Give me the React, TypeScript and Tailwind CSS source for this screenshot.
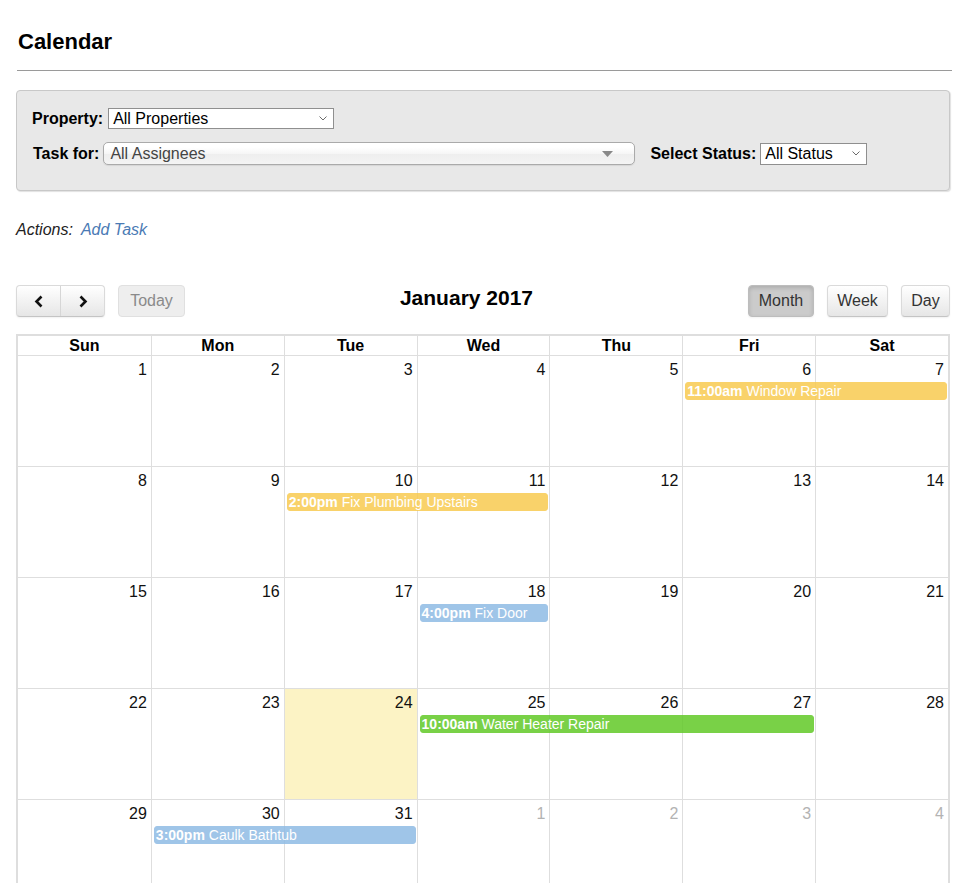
import React from "react";

type CalEvent = {
  col: number;
  span: number;
  time: string;
  title: string;
  color: string;
};

type Week = {
  days: { n: number; other?: boolean; today?: boolean }[];
  events: CalEvent[];
};

const colStart = ["col-start-1", "col-start-2", "col-start-3", "col-start-4", "col-start-5", "col-start-6", "col-start-7"];
const colSpan = ["", "col-span-1", "col-span-2", "col-span-3"];

const YELLOW = "bg-[#f8cb51] border-[#f8cb51]";
const BLUE = "bg-[#8fbbe4] border-[#8fbbe4]";
const GREEN = "bg-[#62c928] border-[#62c928]";

const dayNames = ["Sun", "Mon", "Tue", "Wed", "Thu", "Fri", "Sat"];

const weeks: Week[] = [
  {
    days: [1, 2, 3, 4, 5, 6, 7].map((n) => ({ n })),
    events: [{ col: 5, span: 2, time: "11:00am", title: "Window Repair", color: YELLOW }],
  },
  {
    days: [8, 9, 10, 11, 12, 13, 14].map((n) => ({ n })),
    events: [{ col: 2, span: 2, time: "2:00pm", title: "Fix Plumbing Upstairs", color: YELLOW }],
  },
  {
    days: [15, 16, 17, 18, 19, 20, 21].map((n) => ({ n })),
    events: [{ col: 3, span: 1, time: "4:00pm", title: "Fix Door", color: BLUE }],
  },
  {
    days: [22, 23, 24, 25, 26, 27, 28].map((n) => ({ n, today: n === 24 })),
    events: [{ col: 3, span: 3, time: "10:00am", title: "Water Heater Repair", color: GREEN }],
  },
  {
    days: [
      { n: 29 },
      { n: 30 },
      { n: 31 },
      { n: 1, other: true },
      { n: 2, other: true },
      { n: 3, other: true },
      { n: 4, other: true },
    ],
    events: [{ col: 1, span: 2, time: "3:00pm", title: "Caulk Bathtub", color: BLUE }],
  },
];

const Chevron = () => (
  <svg width="10" height="9" viewBox="0 0 10 6" className="ml-auto shrink-0">
    <polyline points="1.5,1 5,4.5 8.5,1" fill="none" stroke="#6b6b6b" strokeWidth="1" />
  </svg>
);

const btn =
  "h-[32px] justify-center text-[16px] text-[#333] rounded-[4px] border border-[#dadada] border-b-[#c4c4c4] bg-linear-to-b from-white to-[#e6e6e6] shadow-[inset_0_1px_0_rgba(255,255,255,0.2),0_1px_2px_rgba(0,0,0,0.06)] flex items-center";

const App = () => {
  return (
    <div className="w-[970px] h-[883px] overflow-hidden bg-white pl-4 pr-5 font-['Liberation_Sans',Arial,sans-serif] text-black">
      {/* Header */}
      <h1 className="pt-[29px] pl-[2px] text-[22px] leading-[26px] font-bold">Calendar</h1>
      <div className="mt-[15px] ml-px -mr-[2px] border-t border-[#9a9a9a]" />

      {/* Filters */}
      <div className="mt-[19px] rounded-[4px] border border-[#c8c8c8] bg-[#e8e8e8] pl-[15px] pt-[17px] pb-[25px] shadow-[1px_1px_1px_rgba(0,0,0,0.12)]">
        <div className="flex items-center h-[21px]">
          <span className="text-[16px] font-bold">Property:</span>
          <div className="ml-[5px] flex h-[21px] w-[226px] items-center border border-[#8f8f8f] bg-white pl-[4px] pr-[5px] text-[16px]">
            All Properties
            <Chevron />
          </div>
        </div>
        <div className="mt-[13px] flex items-center h-[23px]">
          <span className="pl-px text-[16px] font-bold">Task for:</span>
          <div className="ml-[4px] flex h-[23px] w-[532px] items-center rounded-[5px] border border-[#aaa] bg-[linear-gradient(#fff_20%,#f6f6f6_50%,#eee_52%,#f4f4f4_100%)] pl-[6px] pr-[21px] text-[16px] text-[#444] shadow-[0_1px_1px_rgba(0,0,0,0.08)]">
            All Assignees
            <svg width="11" height="6" viewBox="0 0 11 6" className="ml-auto">
              <polygon points="0,0 11,0 5.5,6" fill="#888" />
            </svg>
          </div>
          <span className="ml-[15px] text-[16px] font-bold">Select Status:</span>
          <div className="ml-[4px] flex h-[22px] w-[107px] items-center border border-[#8f8f8f] bg-white pl-[4px] pr-[5px] text-[16px]">
            All Status
            <Chevron />
          </div>
        </div>
      </div>

      {/* Actions */}
      <div className="mt-[30px] text-[16px] leading-[18px] italic text-[#222]">
        Actions:
        <a className="ml-[8px] text-[#4a7ab4]">Add Task</a>
      </div>

      {/* Toolbar */}
      <div className="mt-[46px] flex h-[32px] items-start justify-between">
        <div className="flex items-center gap-[13px]">
          <div className="flex h-[32px] rounded-[4px] border border-[#dadada] border-b-[#c4c4c4] bg-linear-to-b from-white to-[#e6e6e6] shadow-[0_1px_2px_rgba(0,0,0,0.06)]">
            <div className="flex w-[44px] items-center justify-center border-r border-[#d6d6d6]">
              <svg width="10" height="13" viewBox="0 0 10 13">
                <polyline points="7.5,1.5 2.5,6.5 7.5,11.5" fill="none" stroke="#111" strokeWidth="2.6" />
              </svg>
            </div>
            <div className="flex w-[43px] items-center justify-center">
              <svg width="10" height="13" viewBox="0 0 10 13">
                <polyline points="2.5,1.5 7.5,6.5 2.5,11.5" fill="none" stroke="#111" strokeWidth="2.6" />
              </svg>
            </div>
          </div>
          <div className="flex h-[32px] w-[67px] items-center justify-center rounded-[4px] border border-[#e0e0e0] bg-[#eeeeee] text-[16px] text-[#8a8a8a]">
            Today
          </div>
        </div>
        <h2 className="pt-px text-[21px] leading-[24px] font-bold">January 2017</h2>
        <div className="flex items-center gap-[13px]">
          <div className="flex h-[32px] w-[66px] items-center justify-center rounded-[4px] border border-[#bdbdbd] bg-[#cbcbcb] text-[16px] text-[#333] shadow-[inset_0_2px_4px_rgba(0,0,0,0.15),0_1px_2px_rgba(0,0,0,0.05)]">
            Month
          </div>
          <div className={`${btn} w-[61px]`}>Week</div>
          <div className={`${btn} w-[49px]`}>Day</div>
        </div>
      </div>

      {/* Month grid */}
      <div className="mt-[17px] border-2 border-[#dedede]">
        <div className="grid grid-cols-7 border-b border-[#dedede]">
          {dayNames.map((d, i) => (
            <div
              key={d}
              className={`text-center text-[16px] font-bold leading-[19px] ${i > 0 ? "border-l border-[#dedede]" : ""}`}
            >
              {d}
            </div>
          ))}
        </div>
        {weeks.map((w, wi) => (
          <div key={wi} className="grid h-[111px] grid-cols-7 grid-rows-[26px_18px_1fr] border-b border-[#dedede]">
            {w.days.map((d, i) => (
              <div
                key={i}
                className={`${colStart[i]} row-span-3 row-start-1 pt-[5px] pr-[4px] text-right text-[16px] leading-[18px] ${
                  i > 0 ? "border-l border-[#dedede]" : ""
                } ${d.today ? "bg-[#fcf3c5]" : ""} ${d.other ? "text-[#b3b3b3]" : "text-[#111]"}`}
              >
                {d.n}
              </div>
            ))}
            {w.events.map((e, ei) => (
              <div
                key={ei}
                className={`${colStart[e.col]} ${colSpan[e.span]} row-start-2 ml-[3px] mr-[1px] overflow-hidden whitespace-nowrap rounded-[3px] border px-[1px] text-[14px] leading-[16px] text-white opacity-85 ${e.color}`}
              >
                <span className="font-bold">{e.time}</span> {e.title}
              </div>
            ))}
          </div>
        ))}
      </div>
    </div>
  );
};

export default App;
